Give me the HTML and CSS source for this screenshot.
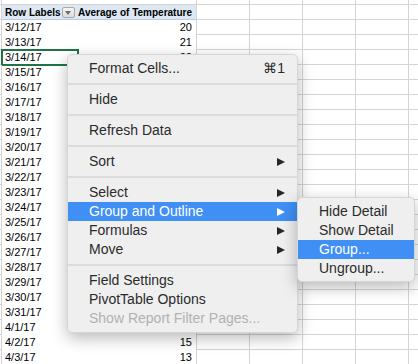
FILE: index.html
```html
<!DOCTYPE html>
<html lang="en">
<head>
    <meta charset="UTF-8">
    <title>Pivot Table - Context Menu</title>
    <link rel="stylesheet" href="styles.css">
</head>
<body>

<div class="sheet">
    <div class="row top"><i class="edge"></i><span class="lbl"></span><span class="val"></span><i></i><i></i><i></i><i></i><i class="last"></i></div>
    <div class="row head"><i class="edge"></i><span class="lbl">Row Labels <b class="drop"></b></span><span class="val">Average of Temperature</span><i></i><i></i><i></i><i></i><i class="last"></i></div>
    <div class="row"><i class="edge"></i><span class="lbl">3/12/17</span><span class="val">20</span><i></i><i></i><i></i><i></i><i class="last"></i></div>
    <div class="row"><i class="edge"></i><span class="lbl">3/13/17</span><span class="val">21</span><i></i><i></i><i></i><i></i><i class="last"></i></div>
    <div class="row"><i class="edge"></i><span class="lbl sel">3/14/17</span><span class="val">22</span><i></i><i></i><i></i><i></i><i class="last"></i></div>
    <div class="row"><i class="edge"></i><span class="lbl">3/15/17</span><span class="val"></span><i></i><i></i><i></i><i></i><i class="last"></i></div>
    <div class="row"><i class="edge"></i><span class="lbl">3/16/17</span><span class="val"></span><i></i><i></i><i></i><i></i><i class="last"></i></div>
    <div class="row"><i class="edge"></i><span class="lbl">3/17/17</span><span class="val"></span><i></i><i></i><i></i><i></i><i class="last"></i></div>
    <div class="row"><i class="edge"></i><span class="lbl">3/18/17</span><span class="val"></span><i></i><i></i><i></i><i></i><i class="last"></i></div>
    <div class="row"><i class="edge"></i><span class="lbl">3/19/17</span><span class="val"></span><i></i><i></i><i></i><i></i><i class="last"></i></div>
    <div class="row"><i class="edge"></i><span class="lbl">3/20/17</span><span class="val"></span><i></i><i></i><i></i><i></i><i class="last"></i></div>
    <div class="row"><i class="edge"></i><span class="lbl">3/21/17</span><span class="val"></span><i></i><i></i><i></i><i></i><i class="last"></i></div>
    <div class="row"><i class="edge"></i><span class="lbl">3/22/17</span><span class="val"></span><i></i><i></i><i></i><i></i><i class="last"></i></div>
    <div class="row"><i class="edge"></i><span class="lbl">3/23/17</span><span class="val"></span><i></i><i></i><i></i><i></i><i class="last"></i></div>
    <div class="row"><i class="edge"></i><span class="lbl">3/24/17</span><span class="val"></span><i></i><i></i><i></i><i></i><i class="last"></i></div>
    <div class="row"><i class="edge"></i><span class="lbl">3/25/17</span><span class="val"></span><i></i><i></i><i></i><i></i><i class="last"></i></div>
    <div class="row"><i class="edge"></i><span class="lbl">3/26/17</span><span class="val"></span><i></i><i></i><i></i><i></i><i class="last"></i></div>
    <div class="row"><i class="edge"></i><span class="lbl">3/27/17</span><span class="val"></span><i></i><i></i><i></i><i></i><i class="last"></i></div>
    <div class="row"><i class="edge"></i><span class="lbl">3/28/17</span><span class="val"></span><i></i><i></i><i></i><i></i><i class="last"></i></div>
    <div class="row"><i class="edge"></i><span class="lbl">3/29/17</span><span class="val"></span><i></i><i></i><i></i><i></i><i class="last"></i></div>
    <div class="row"><i class="edge"></i><span class="lbl">3/30/17</span><span class="val"></span><i></i><i></i><i></i><i></i><i class="last"></i></div>
    <div class="row"><i class="edge"></i><span class="lbl">3/31/17</span><span class="val"></span><i></i><i></i><i></i><i></i><i class="last"></i></div>
    <div class="row"><i class="edge"></i><span class="lbl">4/1/17</span><span class="val"></span><i></i><i></i><i></i><i></i><i class="last"></i></div>
    <div class="row"><i class="edge"></i><span class="lbl">4/2/17</span><span class="val">15</span><i></i><i></i><i></i><i></i><i class="last"></i></div>
    <div class="row"><i class="edge"></i><span class="lbl">4/3/17</span><span class="val">13</span><i></i><i></i><i></i><i></i><i class="last"></i></div>
</div>

<div class="menu">
    <div class="item">Format Cells... <span class="key">⌘1</span></div>
    <div class="sep"></div>
    <div class="item">Hide</div>
    <div class="sep"></div>
    <div class="item">Refresh Data</div>
    <div class="sep"></div>
    <div class="item">Sort <span class="arrow"></span></div>
    <div class="sep"></div>
    <div class="item">Select <span class="arrow"></span></div>
    <div class="item active">Group and Outline <span class="arrow"></span></div>
    <div class="item">Formulas <span class="arrow"></span></div>
    <div class="item">Move <span class="arrow"></span></div>
    <div class="sep"></div>
    <div class="item">Field Settings</div>
    <div class="item">PivotTable Options</div>
    <div class="item disabled">Show Report Filter Pages...</div>
</div>

<div class="menu submenu">
    <div class="item">Hide Detail</div>
    <div class="item">Show Detail</div>
    <div class="item active">Group...</div>
    <div class="item">Ungroup...</div>
</div>

</body>
</html>
```

FILE: styles.css
```css
body { margin: 0; background: #fff; font-family: "Liberation Sans", Arial, sans-serif; overflow: hidden; }

/* spreadsheet */
.sheet { display: flex; flex-direction: column; width: 418px; }
.row { display: flex; height: 15px; font-size: 11px; line-height: 15px; color: #000; }
.row i { box-sizing: border-box; width: 53px; height: 15px; border-left: 1px solid #d4d4d4; border-bottom: 1px solid #d4d4d4; flex: none; }
.row i.edge { width: 2px; border-left: none; border-right: 1px solid #d4d4d4; }
.row i.last { width: 10px; }
.lbl { box-sizing: border-box; width: 76px; padding-left: 3px; flex: none; white-space: nowrap; }
.val { box-sizing: border-box; width: 118px; padding-right: 4px; text-align: right; flex: none; white-space: nowrap; }
.row.top { height: 5px; }
.row.top i, .row.top .lbl, .row.top .val { height: 5px; border-bottom: 1px solid #d4d4d4; }
.row.head .lbl, .row.head .val { background: #dde8f4; border-bottom: 1px solid #b8cde4; font-weight: bold; font-size: 10px; }
.row.head .lbl { display: flex; align-items: center; padding-right: 3px; }
.drop { margin-left: auto; width: 13px; height: 11px; box-sizing: border-box; border: 1px solid #a9a9a9; border-radius: 2px; background: linear-gradient(#f4f4f4, #dcdcdc); position: relative; }
.drop::after { content: ""; position: absolute; left: 2px; top: 3px; border-top: 4px solid #6d6d6d; border-left: 3.5px solid transparent; border-right: 3.5px solid transparent; }
.sel { outline: 2px solid #217346; outline-offset: -1px; }

/* context menus */
.menu { position: absolute; left: 67px; top: 54px; width: 231px; box-sizing: border-box; padding: 4px 0; background: #efefef; border: 1px solid #d6d6d6; border-radius: 5px; box-shadow: 0 5px 16px rgba(0, 0, 0, 0.28); font-family: "Liberation Sans", Arial, sans-serif; font-size: 14px; color: #2b2b2b; }
.menu .item { display: flex; justify-content: space-between; align-items: center; height: 19px; line-height: 19px; padding: 0 12px 0 21px; white-space: nowrap; }
.menu .item.active { background: #3f8ff5; color: #fff; }
.menu .item.disabled { color: #b1b1b1; }
.menu .sep { height: 2px; margin: 5px 0; background: #dcdcdc; }
.arrow { width: 0; height: 0; border-left: 8px solid #262626; border-top: 4.5px solid transparent; border-bottom: 4.5px solid transparent; }
.item.active .arrow { border-left-color: #fff; }
.submenu { left: 297px; top: 197px; width: 118px; padding: 4px 0 3px; }
```
